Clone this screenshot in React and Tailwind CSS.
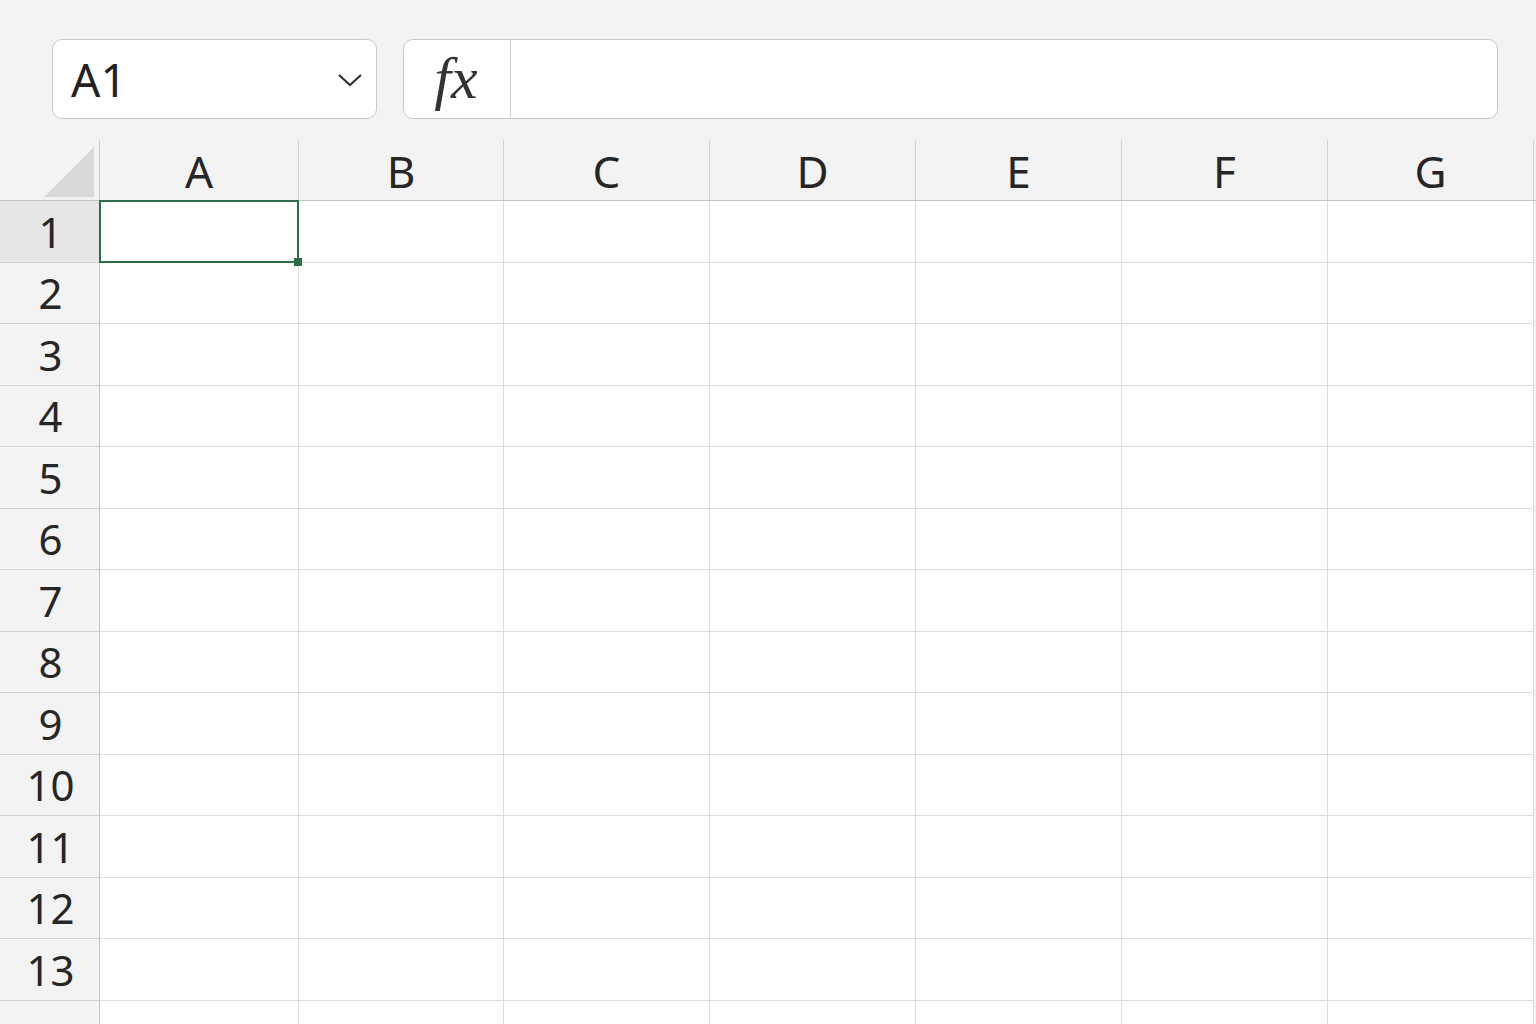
const COLS = [
  { label: "A", w: "w-[199px]" },
  { label: "B", w: "w-[205px]" },
  { label: "C", w: "w-[206px]" },
  { label: "D", w: "w-[206px]" },
  { label: "E", w: "w-[206px]" },
  { label: "F", w: "w-[206px]" },
  { label: "G", w: "w-[206px]" },
];

const ROWS = Array.from({ length: 14 }, (_, i) => i + 1);

function NameBox() {
  return (
    <div className="flex h-[80px] w-[325px] items-center justify-between rounded-[10px] border border-[#c9c9c9] bg-white pl-[18px] pr-[12px]">
      <span className="text-[46px] leading-none text-[#222]">A1</span>
      <svg width="26" height="16" viewBox="0 0 26 16" className="mr-[1px] mt-[2px]">
        <polyline points="2,3 13,13 24,3" fill="none" stroke="#333" strokeWidth="2.2" />
      </svg>
    </div>
  );
}

function FormulaBar() {
  return (
    <div className="flex h-[80px] flex-1 rounded-[10px] border border-[#c9c9c9] bg-white">
      <div className="flex w-[107px] items-center justify-center border-r border-[#d0d0d0] pb-[2px] pr-[2px]">
        <span className="text-[60px] italic leading-none text-[#333] [font-family:'Liberation_Serif','DejaVu_Serif',serif]">
          fx
        </span>
      </div>
      <div className="flex-1" />
    </div>
  );
}

function HeaderRow() {
  return (
    <div className="flex h-[61px] border-b border-[#c4c4c4]">
      {/* corner */}
      <div className="flex w-[100px] items-end justify-end border-r border-[#cfcfcf] pb-[3px] pr-[5px]">
        <svg width="50" height="50" viewBox="0 0 50 50">
          <polygon points="50,0 50,50 0,50" fill="#d9d9d9" />
        </svg>
      </div>
      {COLS.map((c) => (
        <div
          key={c.label}
          className={`${c.w} flex items-center justify-center border-r border-[#d2d2d2] pt-[1px] text-[44px] leading-none text-[#262626]`}
        >
          {c.label}
        </div>
      ))}
    </div>
  );
}

function Row({ n }) {
  const h = n % 2 === 1 ? "h-[62px]" : "h-[61px]";
  return (
    <div className={`flex ${h}`}>
      <div
        className={`flex w-[100px] items-center justify-center border-r border-b border-r-[#c4c4c4] border-b-[#d3d3d3] pl-[2px] text-[42px] leading-none text-[#262626] ${
          n === 1 ? "bg-[#e6e6e6]" : "bg-[#f3f3f3]"
        }`}
      >
        {n < 14 ? n : ""}
      </div>
      {COLS.map((c, i) => (
        <div
          key={c.label}
          className={`${c.w} relative border-r border-b border-[#dcdcdc] bg-white`}
        >
          {n === 1 && i === 0 && (
            <div className="absolute -top-[1px] -left-[1px] -right-[1px] -bottom-[1px] z-10 border-2 border-[#2d6e47]">
              <div className="absolute -right-[5px] -bottom-[5px] h-[8px] w-[8px] bg-[#2d6e47]" />
            </div>
          )}
        </div>
      ))}
    </div>
  );
}

export default function App() {
  return (
    <div className="h-[1024px] w-[1536px] overflow-hidden bg-[#f3f3f3] [font-family:'Noto_Sans','Open_Sans',sans-serif]">
      <div className="flex h-[140px] gap-[26px] pl-[52px] pr-[38px] pt-[39px]">
        <NameBox />
        <FormulaBar />
      </div>
      <HeaderRow />
      {ROWS.map((n) => (
        <Row key={n} n={n} />
      ))}
    </div>
  );
}
